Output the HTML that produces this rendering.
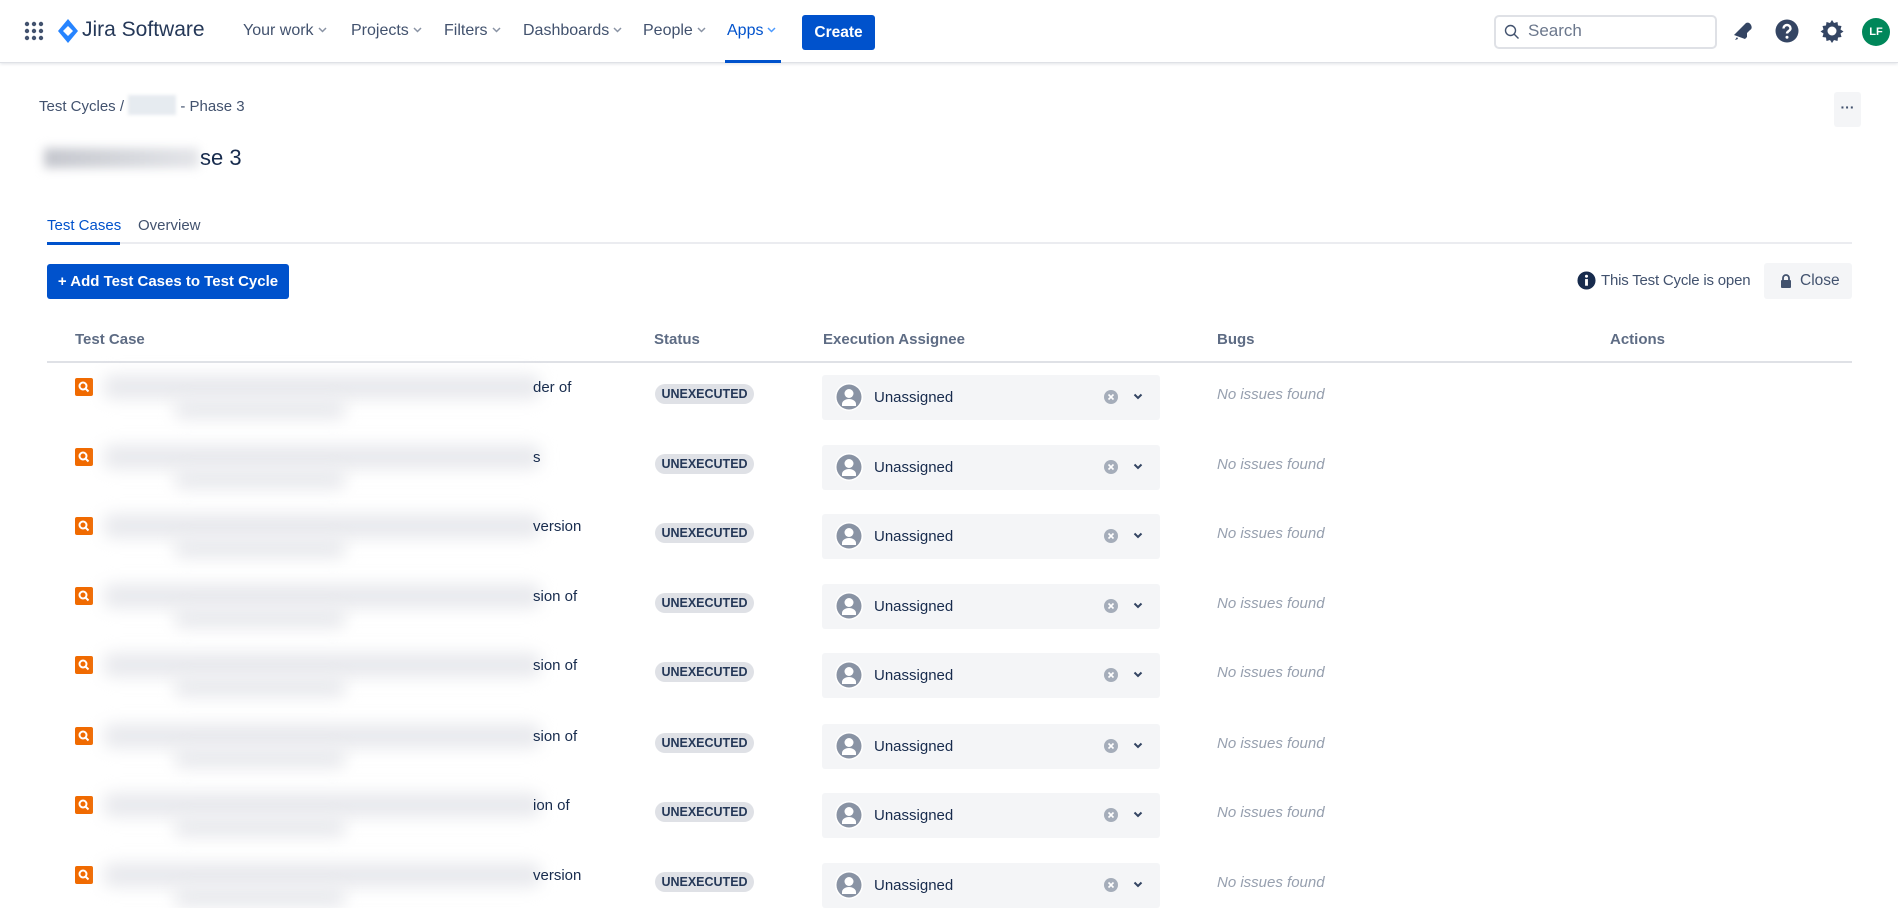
<!DOCTYPE html>
<html><head><meta charset="utf-8"><style>
*{box-sizing:border-box;margin:0;padding:0}
body{width:1898px;height:892px;overflow:hidden;background:#fff;font-family:"Liberation Sans",sans-serif;color:#172b4d;position:relative}
.a{position:absolute}
.hdr{left:0;top:0;width:1898px;height:63px;border-bottom:1px solid #dfe1e6;box-shadow:0 1px 3px rgba(9,30,66,.12)}
.nav{top:22px;font-size:16px;color:#42526e;white-space:nowrap}
.nav svg{margin-left:4px;vertical-align:2px}
.th{top:331px;font-size:15px;font-weight:bold;color:#5e6c84}
.ic{width:18px;height:18px;background:#f06a00;border-radius:2px}
.blur{background:#e8e9ed;filter:blur(8px);border-radius:6px}
.pill{width:99px;height:20px;border-radius:10px;background:#dfe1e6;font-size:12.5px;font-weight:bold;text-align:center;line-height:20px;color:#253858}
.box{width:338px;height:45px;background:#f4f5f7;border-radius:3px}
.nif{font-size:15px;font-style:italic;color:#97a0af}
</style></head><body>
<div class="a hdr"></div>
<svg class="a" style="left:24px;top:21px" width="20" height="20" viewBox="0 0 20 20" fill="#42526e"><circle cx="3" cy="3" r="2.2"/><circle cx="10" cy="3" r="2.2"/><circle cx="17" cy="3" r="2.2"/><circle cx="3" cy="10" r="2.2"/><circle cx="10" cy="10" r="2.2"/><circle cx="17" cy="10" r="2.2"/><circle cx="3" cy="17" r="2.2"/><circle cx="10" cy="17" r="2.2"/><circle cx="17" cy="17" r="2.2"/></svg>
<svg class="a" style="left:58px;top:19px" width="20" height="24" viewBox="0 0 20 24"><path d="M10 0L20 12 10 24 0 12Z" fill="#2684ff"/><path d="M10 7L15 12 10 17 5 12Z" fill="#fff"/></svg>
<div class="a" style="left:82px;top:18px;font-size:21px;color:#253858">Jira Software</div>
<div class="a nav" style="left:243px">Your work<svg width="9" height="6" viewBox="0 0 9 6"><path d="M1 1l3.5 3.5L8 1" fill="none" stroke="#8993a4" stroke-width="1.5"/></svg></div>
<div class="a nav" style="left:351px">Projects<svg width="9" height="6" viewBox="0 0 9 6"><path d="M1 1l3.5 3.5L8 1" fill="none" stroke="#8993a4" stroke-width="1.5"/></svg></div>
<div class="a nav" style="left:444px">Filters<svg width="9" height="6" viewBox="0 0 9 6"><path d="M1 1l3.5 3.5L8 1" fill="none" stroke="#8993a4" stroke-width="1.5"/></svg></div>
<div class="a nav" style="left:523px">Dashboards<svg width="9" height="6" viewBox="0 0 9 6"><path d="M1 1l3.5 3.5L8 1" fill="none" stroke="#8993a4" stroke-width="1.5"/></svg></div>
<div class="a nav" style="left:643px">People<svg width="9" height="6" viewBox="0 0 9 6"><path d="M1 1l3.5 3.5L8 1" fill="none" stroke="#8993a4" stroke-width="1.5"/></svg></div>
<div class="a nav" style="left:727px;color:#0052cc">Apps<svg width="9" height="6" viewBox="0 0 9 6"><path d="M1 1l3.5 3.5L8 1" fill="none" stroke="#4c9aff" stroke-width="1.5"/></svg></div>
<div class="a" style="left:725px;top:60px;width:56px;height:3px;background:#0052cc"></div>
<div class="a" style="left:802px;top:15px;width:73px;height:35px;background:#0052cc;border-radius:3px;color:#fff;font-weight:bold;font-size:15.5px;text-align:center;line-height:35px">Create</div>
<div class="a" style="left:1494px;top:15px;width:223px;height:34px;border:2px solid #dfe1e6;border-radius:5px"></div>
<svg class="a" style="left:1504px;top:24px" width="16" height="16" viewBox="0 0 16 16" fill="none" stroke="#42526e" stroke-width="1.4"><circle cx="6.5" cy="6.5" r="5"/><path d="M10 10l4.5 4.5"/></svg>
<div class="a" style="left:1528px;top:21px;font-size:17px;color:#6b778c">Search</div>
<svg class="a" style="left:1732px;top:20px" width="22" height="22" viewBox="0 0 22 22" fill="#344563"><path d="M4 13L14 3c2-1 4 0 5 2 1 2 1 4-1 5l-3 3 0 4-2 2-11-4z"/><path d="M5 17l-2 3 3-1z"/></svg>
<svg class="a" style="left:1775px;top:19px" width="24" height="24" viewBox="0 0 24 24"><circle cx="12" cy="12" r="11.5" fill="#344563"/><path d="M8.5 9.5a3.5 3.5 0 117 0c0 2.5-3.5 2.5-3.5 5" fill="none" stroke="#fff" stroke-width="2.4"/><circle cx="12" cy="18.2" r="1.5" fill="#fff"/></svg>
<svg class="a" style="left:1820px;top:19px" width="24" height="24" viewBox="0 0 24 24"><path d="M12 1l2 3 3.5-1 .5 3.5 3.5.5-1 3.5 3 2-3 2 1 3.5-3.5.5-.5 3.5-3.5-1-2 3-2-3-3.5 1-.5-3.5-3.5-.5 1-3.5-3-2 3-2-1-3.5 3.5-.5.5-3.5 3.5 1z" fill="#344563"/><circle cx="12" cy="12" r="4.5" fill="#fff"/></svg>
<div class="a" style="left:1862px;top:18px;width:28px;height:28px;border-radius:50%;background:#00875a;color:#fff;font-size:11px;font-weight:bold;text-align:center;line-height:28px">LF</div>

<div class="a" style="left:39px;top:95px;font-size:15px;color:#42526e">Test Cycles / <span style="display:inline-block;width:48px;height:20px;background:#e6ebf0;vertical-align:-4px;filter:blur(1.5px)"></span> - Phase 3</div>
<div class="a" style="left:1834px;top:92px;width:27px;height:35px;background:#f4f5f7;border-radius:3px;text-align:center;font-size:14px;line-height:30px;font-weight:bold;color:#42526e">···</div>
<div class="a" style="left:44px;top:148px;width:155px;height:20px;filter:blur(5px);background:linear-gradient(90deg,#c4c6cd,#d7d9de 60%,#e4e5e9)"></div>
<div class="a" style="left:200px;top:145px;font-size:22px;color:#172b4d">se 3</div>

<div class="a" style="left:47px;top:217px;font-size:15px;color:#0052cc">Test Cases</div>
<div class="a" style="left:138px;top:217px;font-size:15px;color:#42526e">Overview</div>
<div class="a" style="left:47px;top:242px;width:1805px;height:2px;background:#ebecf0"></div>
<div class="a" style="left:47px;top:242px;width:73px;height:3px;background:#0052cc"></div>

<div class="a" style="left:47px;top:264px;width:242px;height:35px;background:#0052cc;border-radius:3px;color:#fff;font-weight:bold;font-size:15px;text-align:center;line-height:35px">+ Add Test Cases to Test Cycle</div>
<svg class="a" style="left:1577px;top:271px" width="19" height="19" viewBox="0 0 20 20"><circle cx="10" cy="10" r="9.5" fill="#172b4d"/><circle cx="10" cy="5.5" r="1.6" fill="#fff"/><rect x="8.5" y="8.5" width="3" height="7" fill="#fff"/></svg>
<div class="a" style="left:1601px;top:272px;font-size:15px;color:#42526e;letter-spacing:-0.2px">This Test Cycle is open</div>
<div class="a" style="left:1764px;top:263px;width:88px;height:36px;background:#f4f5f7;border-radius:3px"></div>
<svg class="a" style="left:1780px;top:274px" width="12" height="14" viewBox="0 0 12 14" fill="#42526e"><rect x="1" y="6" width="10" height="8" rx="1"/><path d="M3 6V4a3 3 0 016 0v2" fill="none" stroke="#42526e" stroke-width="1.8"/></svg>
<div class="a" style="left:1800px;top:272px;font-size:15.5px;color:#42526e">Close</div>

<div class="a th" style="left:75px">Test Case</div>
<div class="a th" style="left:654px">Status</div>
<div class="a th" style="left:823px">Execution Assignee</div>
<div class="a th" style="left:1217px">Bugs</div>
<div class="a th" style="left:1610px">Actions</div>
<div class="a" style="left:47px;top:361px;width:1805px;height:2px;background:#dfe1e6"></div>

<div id="rows"></div>
<script>
var tails=["der of","s","version","sion of","sion of","sion of","ion of","version"];
var cs=[397,467,536,606,675,746,815,885];var h="";
cs.forEach(function(c,i){
h+='<div class="a ic" style="left:75px;top:'+(c-19)+'px"><svg width="18" height="18" viewBox="0 0 18 18" fill="none" stroke="#fff" stroke-width="2"><circle cx="8" cy="8" r="3.5"/><path d="M10.5 10.5l3 3"/></svg></div>';
h+='<div class="a blur" style="left:104px;top:'+(c-22)+'px;width:436px;height:24px"></div>';
h+='<div class="a blur" style="left:175px;top:'+(c+2)+'px;width:170px;height:20px"></div>';
h+='<div class="a" style="left:533px;top:'+(c-18)+'px;font-size:15px;color:#172b4d">'+tails[i]+'</div>';
h+='<div class="a pill" style="left:655px;top:'+(c-13)+'px">UNEXECUTED</div>';
h+='<div class="a box" style="left:822px;top:'+(c-22)+'px"></div>';
h+='<svg class="a" style="left:835px;top:'+(c-14)+'px" width="28" height="28" viewBox="0 0 28 28"><circle cx="14" cy="14" r="14" fill="#fff"/><circle cx="14" cy="14" r="12.5" fill="#8993a4"/><circle cx="14" cy="10.5" r="4.5" fill="#fff"/><path d="M7 21a7 5 0 0114 0v2H7z" fill="#fff"/></svg>';
h+='<div class="a" style="left:874px;top:'+(c-8)+'px;font-size:15px;color:#172b4d">Unassigned</div>';
h+='<svg class="a" style="left:1104px;top:'+(c-7)+'px" width="14" height="14" viewBox="0 0 14 14"><circle cx="7" cy="7" r="7" fill="#a5adba"/><path d="M4.5 4.5l5 5M9.5 4.5l-5 5" stroke="#fff" stroke-width="1.6"/></svg>';
h+='<svg class="a" style="left:1133px;top:'+(c-4)+'px" width="10" height="7" viewBox="0 0 10 7"><path d="M1.5 1.5L5 5l3.5-3.5" fill="none" stroke="#344563" stroke-width="2"/></svg>';
h+='<div class="a nif" style="left:1217px;top:'+(c-11)+'px">No issues found</div>';
});
document.getElementById("rows").innerHTML=h;
</script>
</body></html>
